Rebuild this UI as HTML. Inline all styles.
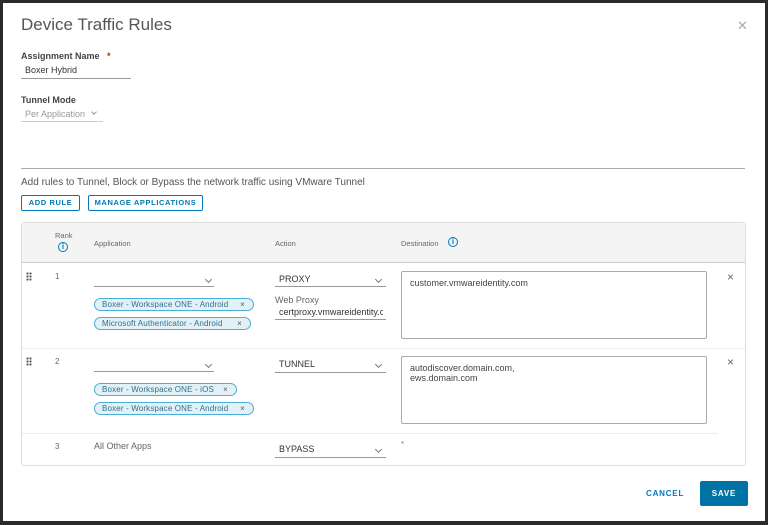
<!DOCTYPE html>
<html><head><meta charset="utf-8"><style>
*{box-sizing:border-box;margin:0;padding:0}
body{width:768px;height:525px;background:#2b2b2b;font-family:"Liberation Sans",sans-serif;color:#333;position:relative;overflow:hidden}
.m{position:absolute;left:3px;top:3px;width:762px;height:518px;background:#fff}
.a{position:absolute;white-space:nowrap}
.ul{position:absolute;height:1px;background:#9a9a9a}
.lbl{font-size:9px;font-weight:bold;color:#444}
.btn{position:absolute;border:1px solid #0079b8;border-radius:2px;color:#0079b8;font-size:7.5px;font-weight:bold;letter-spacing:.6px;text-align:center;line-height:14px;height:16px}
.chip{position:absolute;height:13px;border:1px solid #49afd9;background:#e1f1f6;border-radius:7px;color:#31708f;font-size:8px;line-height:11px;padding-left:7px;white-space:nowrap;letter-spacing:.15px}
.chip span{position:absolute;right:8px;color:#555}
.ta{position:absolute;border:1px solid #aaa;border-radius:2px;font-size:9px;color:#444;padding:6px 8px;line-height:10px}
.hd{font-size:7.5px;color:#666}
.s{font-size:9px;color:#333}
.chev{position:absolute;width:5px;height:5px;border-right:1px solid #777;border-bottom:1px solid #777;transform:rotate(45deg)}
.info{position:absolute;width:10px;height:10px;border:1.3px solid #0079b8;border-radius:50%;color:#0079b8;font-size:8px;font-weight:bold;line-height:8px;text-align:center}
.x{position:absolute;font-size:12px;color:#666}
.drag{position:absolute;width:6px;height:9px;background-image:radial-gradient(circle,#555 1px,transparent 1.2px);background-size:3px 3px}
</style></head><body>
<div class="m"></div>
<div class="a" style="left:21px;top:15px;font-size:17px;color:#555">Device Traffic Rules</div>
<div class="x" style="left:737px;top:18px;font-size:13px;color:#aaa">✕</div>
<div class="a lbl" style="left:21px;top:51px">Assignment Name <span style="color:#c92100;margin-left:5px">*</span></div>
<div class="a s" style="left:25px;top:65px">Boxer Hybrid</div>
<div class="ul" style="left:21px;top:78px;width:110px"></div>
<div class="a lbl" style="left:21px;top:95px">Tunnel Mode</div>
<div class="a" style="left:25px;top:109px;font-size:9px;color:#999">Per Application</div>
<div class="chev" style="left:92px;top:110px;width:4px;height:4px;border-color:#999"></div>
<div class="ul" style="left:21px;top:121px;width:82px;background:#ccc"></div>
<div class="ul" style="left:21px;top:168px;width:724px;background:#aaa"></div>
<div class="a" style="left:21px;top:177px;font-size:10px;color:#555">Add rules to Tunnel, Block or Bypass the network traffic using VMware Tunnel</div>
<div class="btn" style="left:21px;top:195px;width:59px">ADD RULE</div>
<div class="btn" style="left:88px;top:195px;width:115px">MANAGE APPLICATIONS</div>
<div style="position:absolute;left:21px;top:222px;width:725px;height:244px;border:1px solid #ddd;border-radius:3px"></div>
<div style="position:absolute;left:22px;top:223px;width:723px;height:40px;background:#f4f4f4;border-bottom:1px solid #ccc"></div>
<div class="a hd" style="left:55px;top:231px">Rank</div>
<div class="info" style="left:58px;top:242px">i</div>
<div class="a hd" style="left:94px;top:239px">Application</div>
<div class="a hd" style="left:275px;top:239px">Action</div>
<div class="a hd" style="left:401px;top:239px">Destination</div>
<div class="info" style="left:448px;top:237px">i</div>
<!-- row1 -->
<div class="drag" style="left:26px;top:272px"></div>
<div class="a hd" style="left:55px;top:272px;font-size:8px">1</div>
<div class="ul" style="left:94px;top:286px;width:120px"></div>
<div class="chev" style="left:206px;top:277px"></div>
<div class="chip" style="left:94px;top:298px;width:160px">Boxer - Workspace ONE - Android<span>×</span></div>
<div class="chip" style="left:94px;top:317px;width:157px">Microsoft Authenticator - Android<span>×</span></div>
<div class="a s" style="left:279px;top:274px">PROXY</div>
<div class="chev" style="left:376px;top:277px"></div>
<div class="ul" style="left:275px;top:286px;width:111px"></div>
<div class="a" style="left:275px;top:295px;font-size:9px;color:#666">Web Proxy</div>
<div class="a s" style="left:279px;top:307px;width:104px;overflow:hidden">certproxy.vmwareidentity.com</div>
<div class="ul" style="left:275px;top:319px;width:111px"></div>
<div class="ta" style="left:401px;top:271px;width:306px;height:68px">customer.vmwareidentity.com</div>
<div class="x" style="left:727px;top:270px">×</div>
<div class="ul" style="left:22px;top:348px;width:723px;background:#eee"></div>
<!-- row2 -->
<div class="drag" style="left:26px;top:357px"></div>
<div class="a hd" style="left:55px;top:357px;font-size:8px">2</div>
<div class="ul" style="left:94px;top:371px;width:120px"></div>
<div class="chev" style="left:206px;top:362px"></div>
<div class="chip" style="left:94px;top:383px;width:143px">Boxer - Workspace ONE - iOS<span>×</span></div>
<div class="chip" style="left:94px;top:402px;width:160px">Boxer - Workspace ONE - Android<span>×</span></div>
<div class="a s" style="left:279px;top:359px">TUNNEL</div>
<div class="chev" style="left:376px;top:362px"></div>
<div class="ul" style="left:275px;top:372px;width:111px"></div>
<div class="ta" style="left:401px;top:356px;width:306px;height:68px">autodiscover.domain.com,<br>ews.domain.com</div>
<div class="x" style="left:727px;top:355px">×</div>
<div class="ul" style="left:22px;top:433px;width:696px;background:#eee"></div>
<!-- row3 -->
<div class="a hd" style="left:55px;top:442px;font-size:8px">3</div>
<div class="a" style="left:94px;top:441px;font-size:9px;color:#666">All Other Apps</div>
<div class="a s" style="left:279px;top:444px">BYPASS</div>
<div class="chev" style="left:376px;top:447px"></div>
<div class="ul" style="left:275px;top:457px;width:111px"></div>
<div class="a" style="left:401px;top:440px;font-size:8px;color:#888">*</div>
<div class="a" style="left:646px;top:489px;font-size:8px;font-weight:bold;letter-spacing:.8px;color:#0079b8">CANCEL</div>
<div style="position:absolute;left:700px;top:481px;width:48px;height:25px;background:#0072a3;border-radius:2px;color:#fff;font-size:8px;font-weight:bold;letter-spacing:.8px;text-align:center;line-height:25px">SAVE</div>
</body></html>
